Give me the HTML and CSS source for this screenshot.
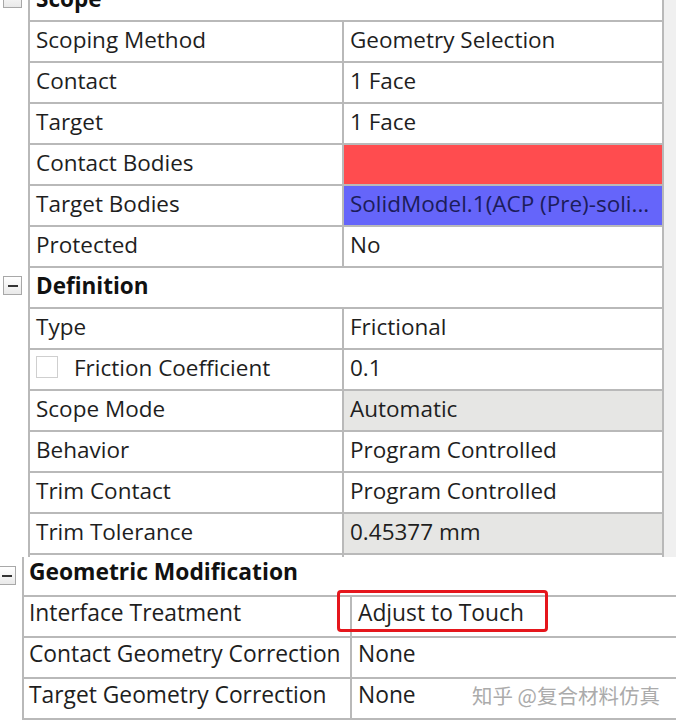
FILE: index.html
```html
<!DOCTYPE html>
<html lang="en">
<head>
  <meta charset="UTF-8" />
  <meta name="viewport" content="width=device-width, initial-scale=1.0"/>
  <title>Contact Details</title>
  <link rel="stylesheet" href="styles.css">
</head>
<body>
  <div class="shot">

    <section class="panel panel-top">
      <div class="grid">
        <div class="inner">
          <div class="row head">
            <div class="gutter"><span class="toggle"></span></div>
            <div class="cell span">Scope</div>
          </div>
          <div class="row">
            <div class="gutter"></div>
            <div class="cell">Scoping Method</div>
            <div class="cell">Geometry Selection</div>
          </div>
          <div class="row">
            <div class="gutter"></div>
            <div class="cell">Contact</div>
            <div class="cell">1 Face</div>
          </div>
          <div class="row">
            <div class="gutter"></div>
            <div class="cell">Target</div>
            <div class="cell">1 Face</div>
          </div>
          <div class="row">
            <div class="gutter"></div>
            <div class="cell">Contact Bodies</div>
            <div class="cell red"></div>
          </div>
          <div class="row">
            <div class="gutter"></div>
            <div class="cell">Target Bodies</div>
            <div class="cell blue">SolidModel.1(ACP (Pre)-soli...</div>
          </div>
          <div class="row">
            <div class="gutter"></div>
            <div class="cell">Protected</div>
            <div class="cell">No</div>
          </div>
          <div class="row head">
            <div class="gutter"><span class="toggle"></span></div>
            <div class="cell span">Definition</div>
          </div>
          <div class="row">
            <div class="gutter"></div>
            <div class="cell">Type</div>
            <div class="cell">Frictional</div>
          </div>
          <div class="row">
            <div class="gutter"></div>
            <div class="cell"><span class="check"></span>Friction Coefficient</div>
            <div class="cell">0.1</div>
          </div>
          <div class="row">
            <div class="gutter"></div>
            <div class="cell">Scope Mode</div>
            <div class="cell grey">Automatic</div>
          </div>
          <div class="row">
            <div class="gutter"></div>
            <div class="cell">Behavior</div>
            <div class="cell">Program Controlled</div>
          </div>
          <div class="row">
            <div class="gutter"></div>
            <div class="cell">Trim Contact</div>
            <div class="cell">Program Controlled</div>
          </div>
          <div class="row">
            <div class="gutter"></div>
            <div class="cell">Trim Tolerance</div>
            <div class="cell grey">0.45377 mm</div>
          </div>
          <div class="row">
            <div class="gutter"></div>
            <div class="cell"></div>
            <div class="cell"></div>
          </div>
        </div>
      </div>
      <div class="scrollbar"></div>
    </section>

    <section class="panel panel-bottom">
      <div class="row head">
        <div class="gutter"><span class="toggle"></span></div>
        <div class="cell span">Geometric Modification</div>
      </div>
      <div class="row">
        <div class="gutter"></div>
        <div class="cell">Interface Treatment</div>
        <div class="cell">Adjust to Touch</div>
      </div>
      <div class="row">
        <div class="gutter"></div>
        <div class="cell">Contact Geometry Correction</div>
        <div class="cell">None</div>
      </div>
      <div class="row">
        <div class="gutter"></div>
        <div class="cell">Target Geometry Correction</div>
        <div class="cell">None</div>
      </div>
    </section>

    <div class="highlight"></div>
    <div class="watermark">知乎 @复合材料仿真</div>
  </div>
</body>
</html>
```

FILE: styles.css
```css
body {
  margin: 0;
  background-color: #fff;
  font-family: 'Open Sans', 'Noto Sans', sans-serif;
  font-size: 22.5px;
  color: #1e1e1e;
}

.shot {
  position: relative;
  width: 676px;
  height: 725px;
  overflow: hidden;
  background-color: #fff;
}

.panel-top {
  display: flex;
  height: 557px;
  overflow: hidden;
}

.grid {
  width: 664px;
  flex-shrink: 0;
}

.inner {
  margin-top: -19px;
}

.row {
  display: grid;
  grid-template-columns: 30px 314px 320px;
  height: 41px;
}

.gutter {
  border-right: 2px solid #b9b9b9;
  padding: 8px 0 0 3px;
}

.cell {
  display: flex;
  align-items: center;
  padding: 0 0 5px 6px;
  border-right: 2px solid #b9b9b9;
  border-bottom: 2px solid #b9b9b9;
  white-space: nowrap;
  overflow: hidden;
}

.cell.span {
  grid-column: 2 / 4;
  font-weight: bold;
  color: #111;
}

.red {
  background-color: #ff4c4f;
}

.blue {
  background-color: #6565fa;
  color: #1c1c5a;
}

.grey {
  background-color: #e6e6e4;
}

.check {
  width: 20px;
  height: 20px;
  border: 1px solid #cfcfcf;
  margin: 0 16px 0 0;
  background-color: #fff;
}

.toggle {
  display: flex;
  align-items: center;
  justify-content: center;
  width: 17px;
  height: 17px;
  border: 1px solid #a8a8a8;
  background: linear-gradient(#ffffff, #e9e9e9);
}

.toggle::before {
  content: "";
  width: 10px;
  height: 2px;
  background-color: #333;
}

.scrollbar {
  flex: 1;
  background-color: #f0f0f0;
}

.panel-bottom {
  font-size: 22.8px;
}

.panel-bottom .row {
  grid-template-columns: 24px 328px 1fr;
}

.panel-bottom .row.head {
  height: 40px;
}

.panel-bottom .gutter {
  padding: 9px 0 0 0;
}

.panel-bottom .toggle {
  margin-left: -3px;
}

.panel-bottom .cell {
  padding: 0 0 8px 5px;
}

.panel-bottom .cell + .cell {
  padding-left: 6px;
  border-right: none;
}

.panel-bottom .cell.span {
  border-right: none;
  padding-bottom: 9px;
}

.highlight {
  position: absolute;
  left: 337px;
  top: 590px;
  width: 211px;
  height: 42px;
  box-sizing: border-box;
  border: 3px solid #e5161c;
  border-radius: 4px;
}

.watermark {
  position: absolute;
  left: 472px;
  top: 680px;
  font-family: 'Noto Sans CJK SC', sans-serif;
  font-size: 20.5px;
  color: #ababab;
}
```
